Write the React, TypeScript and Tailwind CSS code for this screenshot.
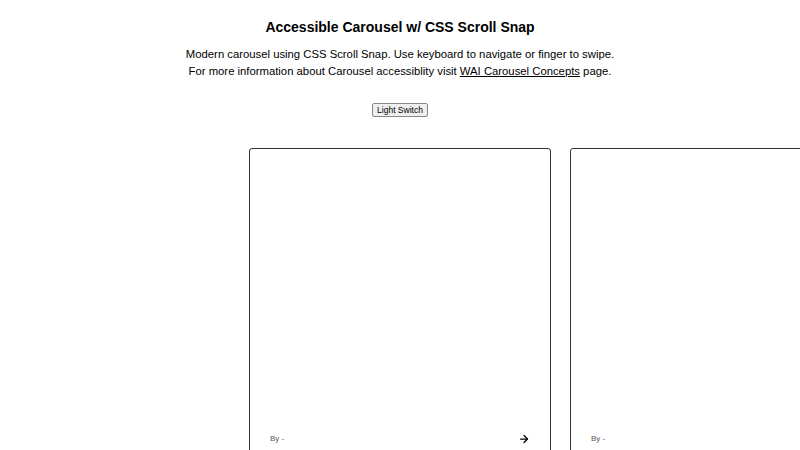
import { ArrowRight } from 'lucide-react';

const slides = [{ id: 1 }, { id: 2 }, { id: 3 }];

function Slide() {
  return (
    <div className="flex h-[306px] w-[302px] shrink-0 flex-col justify-end rounded-[3px] border border-[#333] bg-white px-5 pb-[8px]">
      <div className="flex items-center justify-between">
        <span className="text-[8px] leading-[12px] text-[#555]">By -</span>
        <ArrowRight className="h-3 w-3 text-black" strokeWidth={2.5} />
      </div>
    </div>
  );
}

export default function App() {
  return (
    <div className="h-[450px] w-[800px] overflow-hidden bg-white font-['Liberation_Sans',Arial,sans-serif] text-black">
      <header className="pt-[18px] text-center">
        <h1 className="text-[14px] font-bold leading-[18px]">Accessible Carousel w/ CSS Scroll Snap</h1>
        <p className="mt-[10px] text-[11.3px] leading-[17px]">
          Modern carousel using CSS Scroll Snap. Use keyboard to navigate or finger to swipe.
          <br />
          For more information about Carousel accessiblity visit{' '}
          <a href="#" className="underline">WAI Carousel Concepts</a> page.
        </p>
        <button className="mt-[23px] rounded-[2px] border border-[#888] bg-[#efefef] px-[4px] text-[8.5px] leading-[12px]">
          Light Switch
        </button>
      </header>
      <div className="mt-[28px] flex gap-[19px] pl-[249px]">
        {slides.map((s) => (
          <Slide key={s.id} />
        ))}
      </div>
    </div>
  );
}
